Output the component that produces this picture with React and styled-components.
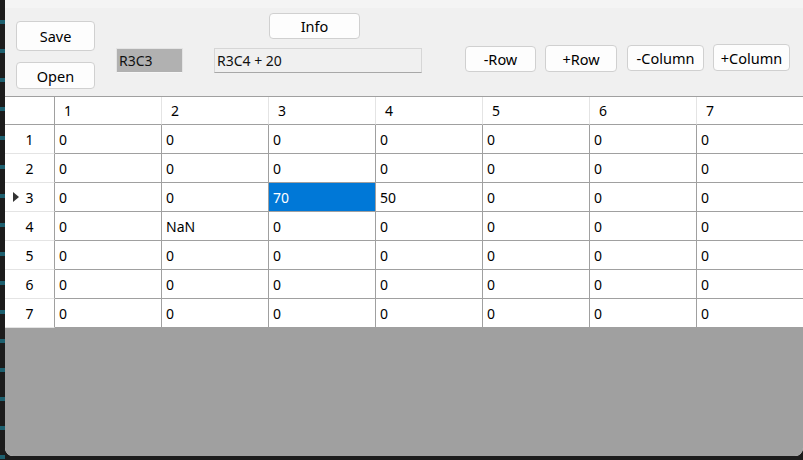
import React from "react";
import styled, { createGlobalStyle } from "styled-components";

const Global = createGlobalStyle`
  html, body { margin: 0; padding: 0; background: #1c1c1c; }
  body { font-family: "Noto Sans", "Open Sans", sans-serif; font-size: 14px; color: #000; }
`;

const Screen = styled.div`
  display: flex;
  width: 803px;
  height: 460px;
  background: #1c1c1c;
  overflow: hidden;
`;

const Desktop = styled.div`
  width: 5px;
  flex: none;
  background: repeating-linear-gradient(180deg, #1c1c1c 0 20px, #1d5f6e 20px 24px, #1c1c1c 24px 29px);
`;

const Window = styled.div`
  width: 798px;
  height: 456px;
  background: #f0f0f0;
  border-bottom-left-radius: 8px;
  border-bottom-right-radius: 8px;
  overflow: hidden;
  display: flex;
  flex-direction: column;
`;

const Toolbar = styled.div`
  height: 96px;
  flex: none;
  display: flex;
  align-items: flex-start;
  background: linear-gradient(180deg, #f4f4f4 0 8px, #f0f0f0 8px);
`;

const Stack = styled.div`
  display: flex;
  flex-direction: column;
  align-items: flex-start;
  gap: ${p => p.$gap || 0}px;
  margin-left: ${p => p.$ml || 0}px;
  margin-top: ${p => p.$mt || 0}px;
`;

const Button = styled.button`
  box-sizing: border-box;
  flex: none;
  width: ${p => p.$w}px;
  height: ${p => p.$h}px;
  margin-left: ${p => p.$ml || 0}px;
  margin-top: ${p => p.$mt || 0}px;
  padding: 0;
  background: #fdfdfd;
  border: 1px solid #d0d0d0;
  border-radius: 4px;
  font-family: "Noto Sans", "Open Sans", sans-serif;
  font-size: 14.5px;
  color: #000;
  display: flex;
  align-items: center;
  justify-content: center;
`;

const Field = styled.div`
  box-sizing: border-box;
  flex: none;
  width: ${p => p.$w}px;
  height: 25px;
  margin-left: ${p => p.$ml || 0}px;
  margin-top: ${p => p.$mt || 0}px;
  padding: 0 2px;
  display: flex;
  align-items: center;
  white-space: pre;
  background: ${p => (p.$dark ? "#b1b1b1" : "#f0f0f0")};
  border: 1px solid ${p => (p.$dark ? "#e4e4e4" : "#d6d6d6")};
  border-bottom-color: ${p => (p.$dark ? "#f6f6f6" : "#a8a8a8")};
  font-size: 14px;
  color: #111;
`;

const Grid = styled.div`
  flex: 1;
  background: #a0a0a0;
  border-top: 1px solid #a0a0a0;
  display: flex;
  flex-direction: column;
`;

const Row = styled.div`
  display: grid;
  grid-template-columns: 50px repeat(7, 107px);
  height: ${p => (p.$header ? 28 : 29)}px;
  flex: none;
`;

const Cell = styled.div`
  box-sizing: border-box;
  display: flex;
  align-items: center;
  padding-left: ${p => (p.$header ? 9 : 4)}px;
  background: ${p => (p.$selected ? "#0078d7" : "#fff")};
  color: ${p => (p.$selected ? "#fff" : "#000")};
  border-right: 1px solid ${p => (p.$header ? "#e4e4e4" : "#a0a0a0")};
  border-bottom: 1px solid #a0a0a0;
  font-size: 14px;
  white-space: nowrap;
  overflow: hidden;
`;

const RowHead = styled.div`
  position: relative;
  box-sizing: border-box;
  display: flex;
  align-items: center;
  justify-content: center;
  background: #fff;
  border-right: 1px solid #a0a0a0;
  border-bottom: 1px solid ${p => (p.$header ? "#a0a0a0" : "#e4e4e4")};
  font-size: 14px;
`;

const Arrow = styled.span`
  position: absolute;
  left: 8px;
  top: 50%;
  margin-top: -5px;
  width: 0;
  height: 0;
  border-top: 5px solid transparent;
  border-bottom: 5px solid transparent;
  border-left: 6px solid #333;
`;

const rows = [
  ["0", "0", "0", "0", "0", "0", "0"],
  ["0", "0", "0", "0", "0", "0", "0"],
  ["0", "0", "70", "50", "0", "0", "0"],
  ["0", "NaN", "0", "0", "0", "0", "0"],
  ["0", "0", "0", "0", "0", "0", "0"],
  ["0", "0", "0", "0", "0", "0", "0"],
  ["0", "0", "0", "0", "0", "0", "0"],
];

export default function App() {
  return (
    <>
      <Global />
      <Screen>
        <Desktop />
        <Window>
          <Toolbar>
            <Stack $ml={11} $mt={21} $gap={11}>
              <Button $w={79} $h={30}>Save</Button>
              <Button $w={79} $h={27}>Open</Button>
            </Stack>
            <Field $dark $w={67} $ml={21} $mt={48}>R3C3</Field>
            <Stack $ml={31} $mt={13} $gap={9}>
              <Button $w={91} $h={26} $ml={55}>Info</Button>
              <Field $w={208}>{"R3C4 + 20"}</Field>
            </Stack>
            <Button $w={71} $h={26} $ml={43} $mt={46}>-Row</Button>
            <Button $w={72} $h={27} $ml={9} $mt={45}>+Row</Button>
            <Button $w={77} $h={26} $ml={10} $mt={45}>-Column</Button>
            <Button $w={77} $h={27} $ml={9} $mt={44}>+Column</Button>
          </Toolbar>
          <Grid>
            <Row $header>
              <RowHead $header />
              {[1, 2, 3, 4, 5, 6, 7].map(n => (
                <Cell key={n} $header>{n}</Cell>
              ))}
            </Row>
            {rows.map((r, i) => (
              <Row key={i}>
                <RowHead>
                  {i === 2 && <Arrow />}
                  {i + 1}
                </RowHead>
                {r.map((v, j) => (
                  <Cell key={j} $selected={i === 2 && j === 2}>{v}</Cell>
                ))}
              </Row>
            ))}
          </Grid>
        </Window>
      </Screen>
    </>
  );
}
